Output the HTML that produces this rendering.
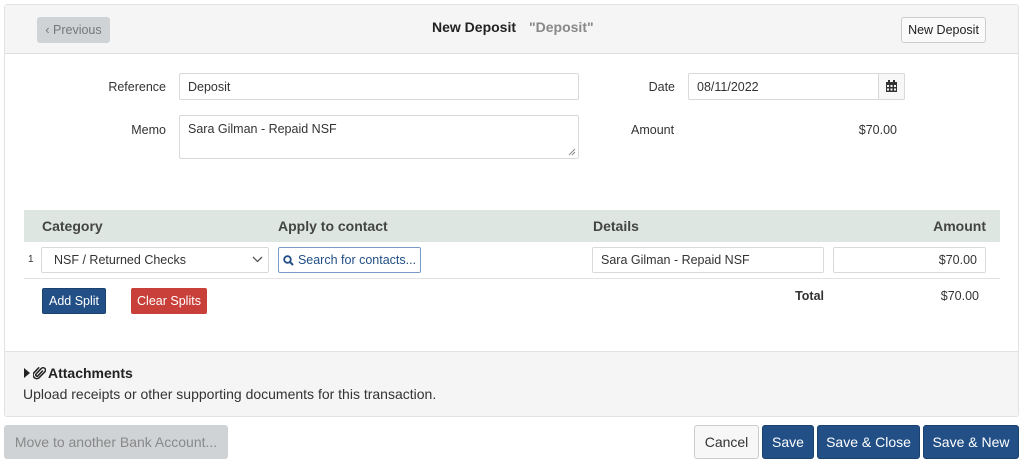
<!DOCTYPE html>
<html><head><meta charset="utf-8"><style>
*{box-sizing:border-box;margin:0;padding:0}
body{width:1024px;height:463px;background:#fff;font-family:"Liberation Sans",sans-serif;font-size:12px;color:#333;position:relative;overflow:hidden}
.a{position:absolute}
.inp{position:absolute;background:#fff;border:1px solid #d9d9d9;border-radius:2px;padding-left:8px;display:flex;align-items:center;font-size:12.5px;color:#333}
.btn{position:absolute;display:flex;align-items:center;justify-content:center;border-radius:3px;font-size:13px}
.lbl{position:absolute;text-align:right;font-size:12.5px;color:#333}
.th{position:absolute;top:218px;font-weight:bold;font-size:14px;color:#444}
.blue{background:#214f86;color:#fff;border:1px solid #1a4170}
</style></head><body>
<div class="a" style="left:4px;top:4px;width:1015px;height:413px;border:1px solid #e2e2e2;border-radius:3px;background:#fff"></div>
<div class="a" style="left:5px;top:5px;width:1013px;height:49px;background:#f5f5f5;border-bottom:1px solid #dedede"></div>
<div class="btn" style="left:37px;top:17px;width:73px;height:26px;background:#d0d3d6;color:#777;font-size:12.5px">&#8249; Previous</div>
<div class="a" style="left:432px;top:19px;font-weight:bold;font-size:14px;color:#222">New Deposit</div>
<div class="a" style="left:529px;top:19px;font-weight:bold;font-size:14px;color:#888">"Deposit"</div>
<div class="btn" style="left:901px;top:17px;width:85px;height:26px;background:#fafafa;border:1px solid #ccc;color:#222;font-size:12.5px">New Deposit</div>

<div class="lbl" style="left:60px;width:106px;top:80px">Reference</div>
<div class="inp" style="left:179px;top:73px;width:400px;height:27px">Deposit</div>
<div class="lbl" style="left:60px;width:106px;top:123px">Memo</div>
<div class="inp" style="left:179px;top:115px;width:400px;height:44px;align-items:flex-start;padding-top:6px">Sara Gilman - Repaid NSF</div>
<svg class="a" style="left:568px;top:148px" width="8" height="8"><path d="M1 7L7 1M4 7L7 4" stroke="#888" stroke-width="1"/></svg>
<div class="lbl" style="left:600px;width:75px;top:80px">Date</div>
<div class="inp" style="left:688px;top:73px;width:217px;height:27px">08/11/2022</div>
<div class="a" style="left:878px;top:73px;width:27px;height:27px;border:1px solid #d9d9d9;background:#f7f7f7;border-radius:0 2px 2px 0"></div>
<svg class="a" style="left:886px;top:80px" width="11" height="12" viewBox="0 0 11 12"><rect x="0" y="2" width="11" height="10" fill="#333"/><rect x="2" y="0" width="2" height="3" fill="#333"/><rect x="7" y="0" width="2" height="3" fill="#333"/><g fill="#f7f7f7"><rect x="1" y="5" width="2" height="2"/><rect x="4.5" y="5" width="2" height="2"/><rect x="8" y="5" width="2" height="2"/><rect x="1" y="8.5" width="2" height="2"/><rect x="4.5" y="8.5" width="2" height="2"/><rect x="8" y="8.5" width="2" height="2"/></g></svg>
<div class="a" style="left:631px;top:123px;font-size:12.5px">Amount</div>
<div class="a" style="left:820px;width:77px;text-align:right;top:123px;font-size:12.5px">$70.00</div>

<div class="a" style="left:24px;top:210px;width:976px;height:32px;background:#dde6e0"></div>
<div class="th" style="left:42px">Category</div>
<div class="th" style="left:278px">Apply to contact</div>
<div class="th" style="left:593px">Details</div>
<div class="th" style="left:900px;width:86px;text-align:right">Amount</div>
<div class="a" style="left:28px;top:254px;font-size:10px">1</div>
<div class="inp" style="left:41px;top:247px;width:228px;height:26px;padding-left:12px">NSF / Returned Checks</div>
<svg class="a" style="left:252px;top:256px" width="11" height="7"><path d="M1 1l4.5 4.5L10 1" stroke="#555" stroke-width="1.3" fill="none"/></svg>
<div class="btn" style="left:278px;top:247px;width:143px;height:26px;border:1px solid #7a9cc8;color:#214f86;font-size:12.5px;border-radius:2px"><svg width="11" height="11" style="margin-right:4px"><circle cx="4.5" cy="4.5" r="3.3" stroke="#214f86" stroke-width="1.8" fill="none"/><path d="M7 7l3 3" stroke="#214f86" stroke-width="2"/></svg>Search for contacts...</div>
<div class="inp" style="left:592px;top:247px;width:232px;height:26px">Sara Gilman - Repaid NSF</div>
<div class="inp" style="left:833px;top:247px;width:153px;height:26px;justify-content:flex-end;padding-right:8px">$70.00</div>
<div class="a" style="left:24px;top:278px;width:976px;height:1px;background:#e3e3e3"></div>
<div class="btn blue" style="left:42px;top:288px;width:64px;height:26px;font-size:12.5px;border-radius:2px">Add Split</div>
<div class="btn" style="left:131px;top:288px;width:76px;height:26px;background:#c9403a;color:#fff;font-size:12.5px;border-radius:2px">Clear Splits</div>
<div class="a" style="left:760px;width:64px;text-align:right;top:289px;font-weight:bold;font-size:12.5px">Total</div>
<div class="a" style="left:900px;width:79px;text-align:right;top:289px;font-size:12.5px">$70.00</div>

<div class="a" style="left:5px;top:351px;width:1013px;height:65px;background:#f5f5f5;border-top:1px solid #e2e2e2"></div>
<svg class="a" style="left:24px;top:368px" width="6" height="10"><path d="M0 0L6 5L0 10Z" fill="#222"/></svg>
<svg class="a" style="left:33px;top:366px" width="13" height="14" viewBox="0 0 13 14"><path d="M9.5 5L5 9.8a1.3 1.3 0 0 1-1.9-1.8L8.4 2.4a2.4 2.4 0 0 1 3.4 3.4L6 11.8a3.6 3.6 0 0 1-5.1-5L5.7 1.8" stroke="#222" stroke-width="1.5" fill="none" stroke-linecap="round"/></svg>
<div class="a" style="left:48px;top:365px;font-size:14px;font-weight:bold;color:#222">Attachments</div>
<div class="a" style="left:23px;top:386px;font-size:14px;color:#333">Upload receipts or other supporting documents for this transaction.</div>

<div class="btn" style="left:4px;top:425px;width:224px;height:34px;background:#d0d3d6;color:#888;font-size:14px">Move to another Bank Account...</div>
<div class="btn" style="left:694px;top:425px;width:65px;height:34px;background:#f7f7f7;border:1px solid #ccc;color:#333;font-size:14px">Cancel</div>
<div class="btn blue" style="left:762px;top:425px;width:52px;height:34px;font-size:14px">Save</div>
<div class="btn blue" style="left:817px;top:425px;width:103px;height:34px;font-size:14px">Save &amp; Close</div>
<div class="btn blue" style="left:923px;top:425px;width:96px;height:34px;font-size:14px">Save &amp; New</div>
</body></html>
